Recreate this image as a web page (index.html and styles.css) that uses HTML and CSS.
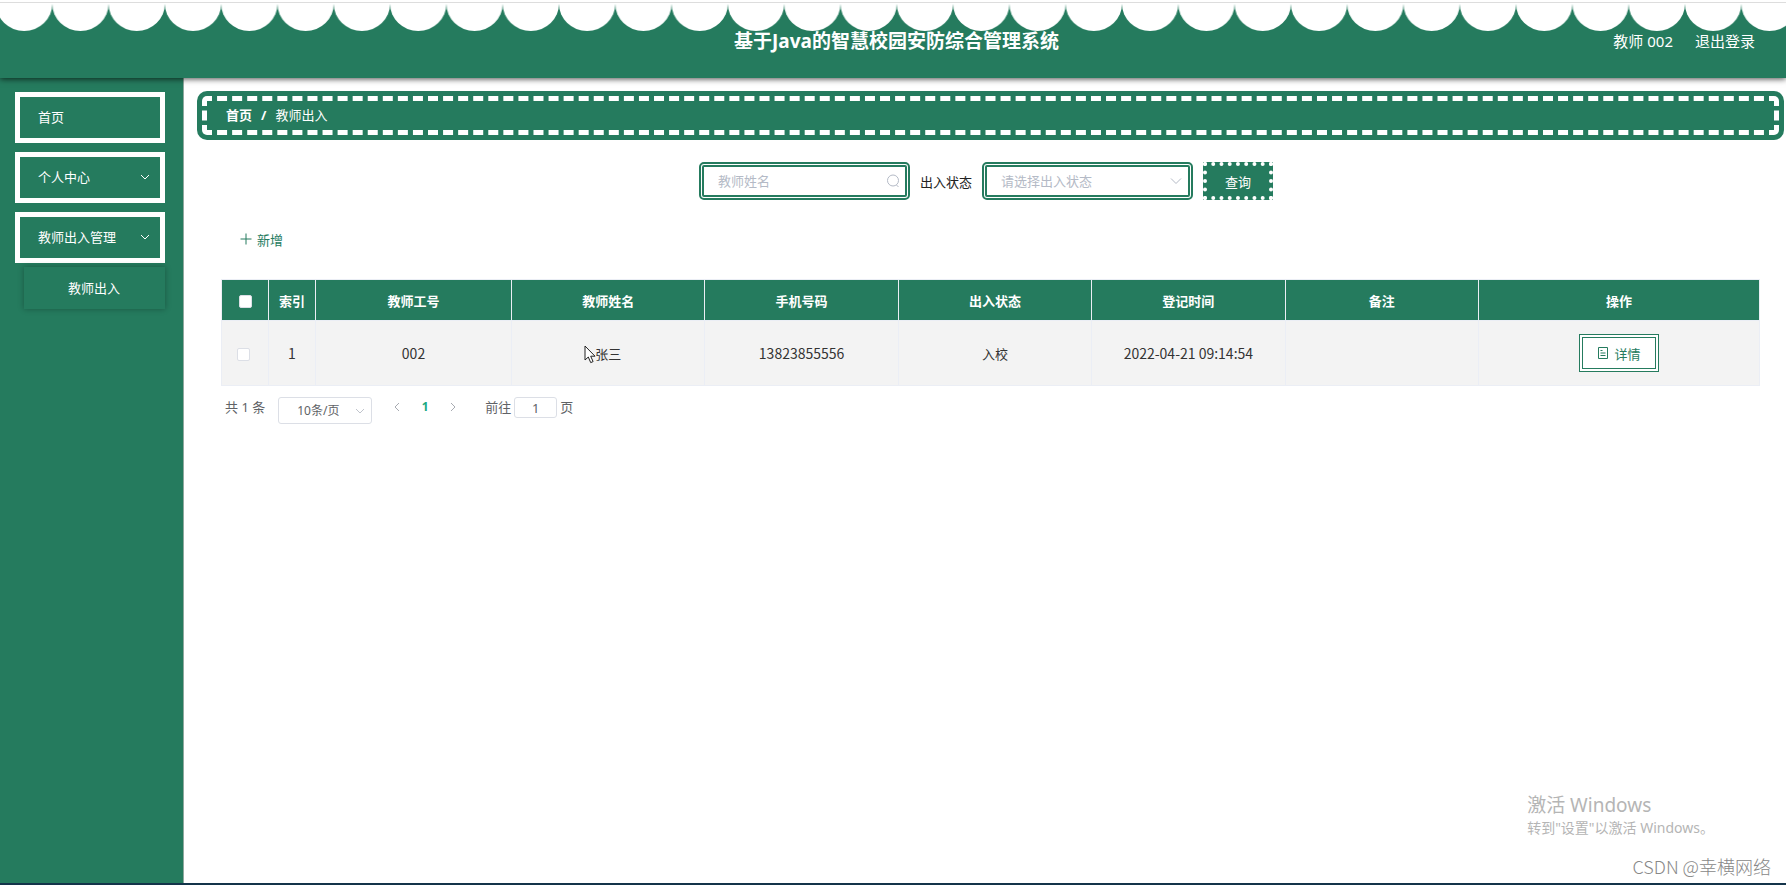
FILE: index.html
```html
<!DOCTYPE html>
<html lang="zh-CN">
<head>
    <meta charset="UTF-8">
    <meta name="viewport" content="width=device-width, initial-scale=1.0">
    <title>基于Java的智慧校园安防综合管理系统</title>
    <link rel="stylesheet" href="styles.css">
</head>
<body>

<header class="header">
    <svg class="scallops" aria-hidden="true">
        <defs>
            <pattern id="scallop" x="-4" y="0" width="56.3" height="28" patternUnits="userSpaceOnUse">
                <ellipse cx="28.15" cy="0" rx="28.15" ry="27" fill="#fff"/>
            </pattern>
        </defs>
        <rect width="100%" height="28" fill="url(#scallop)"/>
    </svg>
    <h1 class="title">基于Java的智慧校园安防综合管理系统</h1>
    <div class="user">
        <span>教师 002</span>
        <a href="#">退出登录</a>
    </div>
</header>

<div class="layout">
    <nav class="sidebar">
        <a class="menu-item" href="#">首页</a>
        <button class="menu-item" type="button">个人中心
            <svg class="arrow" viewBox="0 0 10 10"><path d="M1 3l4 4 4-4"/></svg>
        </button>
        <button class="menu-item" type="button">教师出入管理
            <svg class="arrow" viewBox="0 0 10 10"><path d="M1 3l4 4 4-4"/></svg>
        </button>
        <a class="submenu-item" href="#">教师出入</a>
    </nav>

    <main class="main">
        <div class="breadcrumb">
            <a href="#">首页</a>
            <b>/</b>
            <span>教师出入</span>
        </div>

        <div class="content">
            <form class="search">
                <div class="field">
                    <input type="text" placeholder="教师姓名" aria-label="教师姓名">
                    <svg class="field-icon" viewBox="0 0 14 14"><circle cx="7" cy="6.5" r="5.5"/><path d="M10.5 11l2 2"/></svg>
                </div>
                <label for="status">出入状态</label>
                <div class="field">
                    <select id="status">
                        <option>请选择出入状态</option>
                        <option>入校</option>
                    </select>
                    <svg class="field-icon" viewBox="0 0 14 14"><path d="M2 4.500l5 5 5-5"/></svg>
                </div>
                <button class="search-btn" type="button">查询</button>
            </form>

            <button class="add-btn" type="button">
                <svg viewBox="0 0 12 12"><path d="M6 0.500v11M0.500 6h11"/></svg>新增
            </button>

            <table class="table">
                <colgroup>
                    <col class="col-small">
                    <col class="col-small">
                    <col class="col-id">
                    <col>
                    <col>
                    <col>
                    <col>
                    <col>
                    <col class="col-action">
                </colgroup>
                <thead>
                    <tr>
                        <th><input type="checkbox" aria-label="全选"></th>
                        <th>索引</th>
                        <th>教师工号</th>
                        <th>教师姓名</th>
                        <th>手机号码</th>
                        <th>出入状态</th>
                        <th>登记时间</th>
                        <th>备注</th>
                        <th>操作</th>
                    </tr>
                </thead>
                <tbody>
                    <tr>
                        <td><input type="checkbox" aria-label="选择"></td>
                        <td class="num">1</td>
                        <td class="num">002</td>
                        <td>张三</td>
                        <td class="num">13823855556</td>
                        <td>入校</td>
                        <td class="num">2022-04-21 09:14:54</td>
                        <td></td>
                        <td>
                            <button class="detail-btn" type="button">
                                <svg viewBox="0 0 12 12"><path d="M1.500 0.500h9v11h-9zM3.500 3.500h2M3.500 6h5M3.500 8.500h5"/></svg>详情
                            </button>
                        </td>
                    </tr>
                </tbody>
            </table>

            <div class="pagination">
                <span class="total">共 1 条</span>
                <div class="page-size">
                    <select aria-label="每页条数">
                        <option>10条/页</option>
                    </select>
                    <svg viewBox="0 0 10 10"><path d="M1 3l4 4 4-4"/></svg>
                </div>
                <button class="page-btn" type="button" aria-label="上一页"><svg viewBox="0 0 10 10"><path d="M7 1L3 5l4 4"/></svg></button>
                <button class="page-btn active" type="button">1</button>
                <button class="page-btn" type="button" aria-label="下一页"><svg viewBox="0 0 10 10"><path d="M3 1l4 4-4 4"/></svg></button>
                <label class="jump">前往 <input type="text" value="1"> 页</label>
            </div>
        </div>
    </main>
</div>

<svg class="cursor" viewBox="0 0 12 19" aria-hidden="true">
    <path d="M1 1v14l3.300-3 2.400 5.600 2.400-1-2.400-5.400H11z"/>
</svg>

<div class="activate">
    <p class="activate-title">激活 Windows</p>
    <p>转到"设置"以激活 Windows。</p>
</div>
<div class="watermark">CSDN @幸横网络</div>
<div class="taskbar"></div>

</body>
</html>
```

FILE: styles.css
```css
* {
    box-sizing: border-box;
}
body {
    margin: 0;
    min-height: 100vh;
    display: flex;
    flex-direction: column;
    background: #fff;
    color: #333;
    font-family: "Noto Sans", "Noto Sans CJK SC", sans-serif;
    font-size: 13px;
}
a {
    color: inherit;
    text-decoration: none;
}
button, input, select {
    font: inherit;
    color: inherit;
    margin: 0;
}
button {
    cursor: pointer;
}
svg {
    fill: none;
    stroke: currentColor;
    flex: none;
}

/* header */
.header {
    position: relative;
    z-index: 1;
    height: 78px;
    display: grid;
    grid-template-columns: 1fr auto 1fr;
    align-items: center;
    padding: 4px 31px 0 38px;
    border-top: 4px solid #fff;
    background: #257b5e;
    color: #fff;
    box-shadow: 0 1px 6px rgba(0, 0, 0, 0.7);
}
.header::before {
    content: "";
    position: absolute;
    top: -2px;
    left: 0;
    right: 0;
    height: 1px;
    background: #ddd;
}
.scallops {
    position: absolute;
    top: 0;
    left: 0;
    width: 100%;
    height: 28px;
    stroke: none;
}
.title {
    position: relative;
    grid-column: 2;
    margin: 0;
    font-size: 19px;
    line-height: 28px;
    padding-bottom: 4px;
}
.user {
    position: relative;
    justify-self: end;
    display: flex;
    gap: 22px;
    font-size: 15px;
    padding-bottom: 6px;
}

/* sidebar */
.layout {
    flex: 1;
    display: flex;
}
.sidebar {
    width: 184px;
    flex: none;
    display: flex;
    flex-direction: column;
    gap: 9px;
    padding: 14px 18px 14px 15px;
    background: #257b5e;
    color: #fff;
    border-right: 1px solid #8fa89e;
}
.menu-item {
    display: flex;
    align-items: center;
    justify-content: space-between;
    height: 51px;
    padding: 0 10px 2px 18px;
    border: 5px solid #fff;
    background: #257b5e;
    text-align: left;
}
.arrow {
    width: 10px;
    height: 10px;
}
.submenu-item {
    height: 42px;
    margin: -5px 0 0 9px;
    line-height: 42px;
    padding-left: 44px;
    box-shadow: 0 0 6px rgba(0, 0, 0, 0.3);
}

/* main */
.main {
    flex: 1;
    min-width: 0;
    padding: 18px 7px 0 18px;
}
.breadcrumb {
    display: flex;
    align-items: center;
    gap: 9px;
    height: 39px;
    padding: 0 0 2px 19px;
    border: 5px dashed #fff;
    border-radius: 5px;
    background: #257b5e;
    box-shadow: 0 0 0 5px #257b5e;
    color: #fff;
}
.breadcrumb a {
    font-weight: bold;
}
.content {
    padding: 27px 19px 0;
}
.search {
    display: flex;
    justify-content: center;
    align-items: center;
    gap: 10px;
    padding-right: 9px;
}
.search label {
    color: #222;
}
.field {
    position: relative;
}
.field input, .field select {
    display: block;
    width: 211px;
    height: 38px;
    padding: 0 14px;
    border: 5px double #257b5e;
    border-radius: 5px;
    background: #fff;
    color: #b4bac6;
    appearance: none;
    outline: none;
}
.field input::placeholder {
    color: #b4bac6;
}
.field-icon {
    position: absolute;
    top: 12px;
    right: 10px;
    width: 14px;
    height: 14px;
    color: #b4bac6;
    pointer-events: none;
}
.search-btn {
    width: 70px;
    height: 38px;
    padding: 0;
    border: 4px dotted #fff;
    background: #257b5e;
    color: #fff;
}
.add-btn {
    display: flex;
    align-items: center;
    gap: 5px;
    height: 38px;
    margin: 20px 0 21px;
    padding: 0 19px;
    border: 0;
    background: none;
    color: #257b5e;
}
.add-btn svg {
    width: 12px;
    height: 12px;
}

/* table */
.table {
    width: 100%;
    table-layout: fixed;
    border-collapse: collapse;
    text-align: center;
}
.col-small {
    width: 47px;
}
.col-id {
    width: 196px;
}
.col-action {
    width: 281px;
}
.table th, .table td {
    padding: 0;
    border: 1px solid #ebeef5;
}
.table th {
    height: 41px;
    background: #257b5e;
    color: #fff;
}
.table td {
    height: 65px;
    background: #f3f3f3;
}
.table .num {
    font-family: "Noto Sans CJK SC", sans-serif;
    font-size: 14px;
}
.table input {
    appearance: none;
    display: inline-block;
    vertical-align: middle;
    width: 13px;
    height: 13px;
    border: 1px solid #dcdfe6;
    border-radius: 2px;
    background: #fff;
}
.table td input {
    margin-right: 3px;
}
.detail-btn {
    display: inline-flex;
    align-items: center;
    justify-content: center;
    gap: 5px;
    width: 80px;
    height: 38px;
    padding: 0;
    border: 4px double #257b5e;
    background: #fff;
    color: #257b5e;
}
.detail-btn svg {
    width: 12px;
    height: 12px;
}

/* pagination */
.pagination {
    display: flex;
    align-items: flex-start;
    padding: 11px 4px;
    line-height: 20px;
    color: #606266;
}
.page-size {
    position: relative;
    margin: 0 11px 0 13px;
}
.page-size select {
    display: block;
    width: 94px;
    height: 27px;
    padding: 0 18px;
    border: 1px solid #dcdfe6;
    border-radius: 3px;
    background: #fff;
    font-size: 12px;
    appearance: none;
}
.page-size svg {
    position: absolute;
    top: 9px;
    right: 7px;
    width: 10px;
    height: 10px;
    color: #c0c4cc;
    pointer-events: none;
}
.page-btn {
    display: flex;
    align-items: center;
    justify-content: center;
    width: 28px;
    height: 20px;
    padding: 0;
    border: 0;
    background: none;
    color: #a8abb2;
}
.page-btn svg {
    width: 10px;
    height: 10px;
}
.page-btn.active {
    color: #18a880;
    font-size: 12px;
    font-weight: bold;
}
.jump {
    display: flex;
    gap: 3px;
    margin-left: 18px;
}
.jump input {
    width: 43px;
    height: 21px;
    padding: 0;
    border: 1px solid #dcdfe6;
    border-radius: 3px;
    text-align: center;
}

/* overlays */
.cursor {
    position: absolute;
    left: 584px;
    top: 345px;
    width: 12px;
    height: 19px;
    fill: #fff;
    stroke: #222;
}
.activate {
    position: absolute;
    right: 72px;
    bottom: 47px;
    color: #b5b5b5;
    font-size: 14px;
    line-height: 20px;
}
.activate p {
    margin: 0;
}
.activate .activate-title {
    font-size: 19px;
    line-height: 26px;
}
.watermark {
    position: absolute;
    right: 15px;
    bottom: 6px;
    color: #888;
    font-family: "Noto Sans CJK SC", sans-serif;
    font-size: 18px;
    font-weight: 300;
    line-height: 26px;
}
.taskbar {
    position: absolute;
    left: 0;
    right: 0;
    bottom: 0;
    height: 2px;
    background: #14344a;
}
```
